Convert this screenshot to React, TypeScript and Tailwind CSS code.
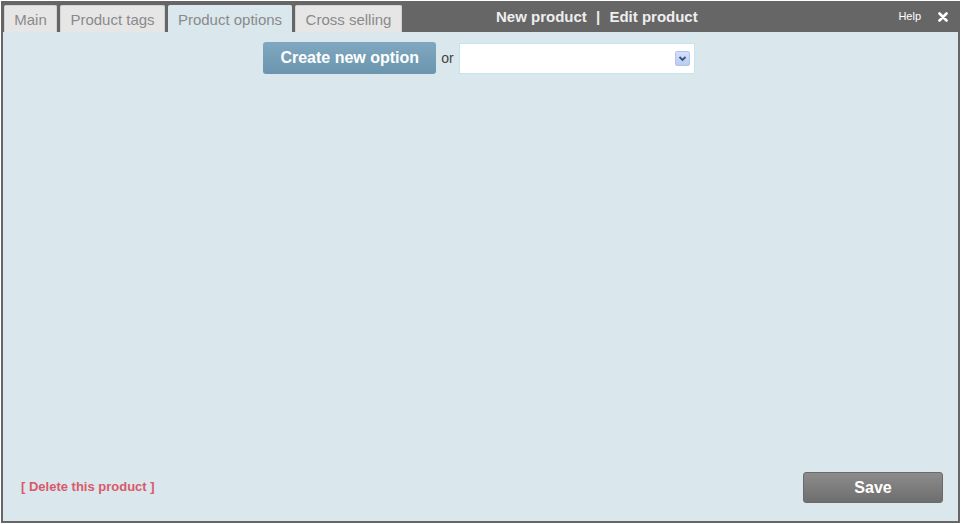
import React from 'react';

const TABS = [
  { label: 'Main', w: 'w-[53px]' },
  { label: 'Product tags', w: 'w-[105px]' },
  { label: 'Product options', w: 'w-[124px]' },
  { label: 'Cross selling', w: 'w-[107px]' },
];
const ACTIVE = 'Product options';

export default function App() {
  return (
    <div
      className="w-[961px] h-[524px] bg-white p-px"
      style={{ fontFamily: '"Liberation Sans", Arial, sans-serif' }}
    >
      <div className="flex flex-col h-full border-2 border-t-0 border-[#666666] bg-[#dae7ed]">
        {/* Header: tabs + title */}
        <div className="flex items-end h-[31px] bg-[#666666] pl-[1px] pr-[10px] relative">
          <div className="flex items-end gap-[3px]">
            {TABS.map((tab) => (
              <div
                key={tab.label}
                className={`h-[27px] ${tab.w} pt-[2px] flex items-center justify-center rounded-t-[2px] border border-b-0 text-[15px] text-[#8a8a8a] ${
                  tab.label === ACTIVE ? 'bg-[#dae7ed] border-[#dae7ed]' : 'bg-[#e6e6e6] border-[#d2d2d2]'
                }`}
              >
                {tab.label}
              </div>
            ))}
          </div>
          <div className="absolute left-[493px] top-[5px] text-[15px] font-bold text-[#eeeeee]">
            New product <span className="mx-[5px]">|</span> Edit product
          </div>
          <div className="ml-auto flex items-center h-full gap-[17px]">
            <span className="text-[11px] text-white">Help</span>
            <svg width="10" height="10" viewBox="0 0 10 10" className="mt-[1px]">
              <path d="M1.5 1.5 L8.5 8.5 M8.5 1.5 L1.5 8.5" stroke="#ffffff" strokeWidth="2.6" strokeLinecap="round" />
            </svg>
          </div>
        </div>

        {/* Body */}
        <div className="flex-1 flex flex-col">
          <div className="flex items-center justify-center mt-[10px] gap-[5px] pr-[3px]">
            <button className="w-[173px] h-[32px] rounded-[3px] bg-gradient-to-b from-[#80a8c0] to-[#6b95ae] text-white font-bold text-[16px]">
              Create new option
            </button>
            <span className="text-[14px] text-[#444444]">or</span>
            <div className="w-[236px] h-[31px] bg-white border border-[#c5e5ec] flex items-center justify-end pr-[4px]">
              <div className="w-[15px] h-[15px] rounded-[2px] bg-gradient-to-b from-[#d3e0fa] to-[#b8cdf2] border border-[#b0c4ea] flex items-center justify-center">
                <svg width="9" height="7" viewBox="0 0 9 7">
                  <path d="M1.5 2 L4.5 5 L7.5 2" stroke="#3b4f7a" strokeWidth="1.8" fill="none" />
                </svg>
              </div>
            </div>
          </div>

          <div className="mt-auto flex items-center justify-between pl-[18px] pr-[15px] pb-[18px]">
            <span className="text-[13px] font-bold text-[#d9596a] -mt-[2px]">[ Delete this product ]</span>
            <button className="w-[140px] h-[31px] rounded-[3px] bg-gradient-to-b from-[#8c8c8c] to-[#6e6e6e] text-white font-bold text-[16px] border border-[#6a6a6a]">
              Save
            </button>
          </div>
        </div>
      </div>
    </div>
  );
}
